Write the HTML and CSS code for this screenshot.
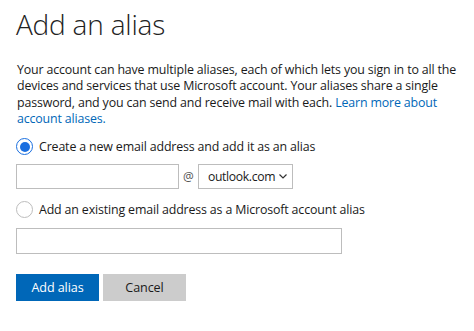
FILE: index.html
```html
<!DOCTYPE html>
<html>
<head>
<meta charset="utf-8">
<link rel="stylesheet" href="styles.css">
</head>
<body>
<main class="page">
  <h1 class="title">Add an alias</h1>
  <p class="intro">Your account can have multiple aliases, each of which lets you sign in to all the devices and services that use Microsoft account. Your aliases share a single password, and you can send and receive mail with each. <a href="#" class="link">Learn more about account aliases.</a></p>

  <label class="option option-first">
    <span class="radio radio-on"><span class="dot"></span></span>
    <span class="option-text">Create a new email address and add it as an alias</span>
  </label>
  <div class="new-row">
    <input class="field field-short" type="text">
    <span class="at">@</span>
    <div class="select-wrap">
      <select class="select"><option>outlook.com</option></select>
      <svg class="chev" width="8" height="5" viewBox="0 0 8 5"><path d="M0.5 0.5 L4 4 L7.5 0.5" fill="none" stroke="#333" stroke-width="1.2"/></svg>
    </div>
  </div>

  <label class="option option-second">
    <span class="radio"></span>
    <span class="option-text">Add an existing email address as a Microsoft account alias</span>
  </label>
  <input class="field field-long" type="text">

  <div class="actions">
    <button class="btn btn-primary">Add alias</button>
    <button class="btn btn-secondary">Cancel</button>
  </div>
</main>
</body>
</html>
```
FILE: styles.css
```css
html, body {
  margin: 0;
  padding: 0;
  background: #fff;
}
.page {
  padding: 7px 0 0 16px;
  font-family: "Open Sans", "Noto Sans", sans-serif;
  color: #1a1a1a;
}
.title {
  margin: 0;
  font-family: "Open Sans", sans-serif;
  font-weight: 300;
  font-size: 28px;
  line-height: 34px;
  color: #222;
  letter-spacing: -0.2px;
}
.intro {
  margin: 21px 0 0 1px;
  width: 445px;
  font-size: 12.4px;
  line-height: 16.3px;
  letter-spacing: -0.15px;
  color: #1a1a1a;
}
.link {
  color: #0067b8;
  text-decoration: none;
}
.option {
  display: flex;
  align-items: center;
  gap: 6px;
  font-size: 12.4px;
  line-height: 17px;
  letter-spacing: -0.15px;
  color: #1a1a1a;
}
.option-first { margin-top: 11px; }
.option-second { margin-top: 12px; }
.radio {
  box-sizing: border-box;
  width: 17px;
  height: 17px;
  border-radius: 50%;
  border: 1px solid #bdbdbd;
  display: flex;
  align-items: center;
  justify-content: center;
  flex: none;
}
.radio-on {
  border: 1.5px solid #1a6fe0;
}
.dot {
  width: 10px;
  height: 10px;
  border-radius: 50%;
  background: #1a6fe0;
}
.new-row {
  display: flex;
  align-items: center;
  margin-top: 9px;
}
.field {
  box-sizing: border-box;
  height: 25px;
  border: 1px solid #bdbdbd;
  margin: 0;
  padding: 0 6px;
  font: inherit;
  background: #fff;
}
.field-short { width: 163px; }
.at {
  width: 19px;
  text-align: center;
  font-size: 12px;
  color: #555;
}
.select-wrap {
  position: relative;
}
.select {
  box-sizing: border-box;
  appearance: none;
  -webkit-appearance: none;
  width: 95px;
  height: 25px;
  border: 1px solid #bdbdbd;
  border-radius: 0;
  background: #fff;
  padding: 0 0 0 9px;
  margin: 0;
  font-family: "Open Sans", sans-serif;
  font-size: 12.2px;
  letter-spacing: -0.35px;
  color: #1a1a1a;
}
.chev {
  position: absolute;
  right: 6px;
  top: 10px;
}
.field-long {
  display: block;
  width: 326px;
  height: 26px;
  margin-top: 10px;
}
.actions {
  display: flex;
  gap: 4px;
  margin-top: 20px;
}
.btn {
  width: 83px;
  height: 27px;
  border: 0;
  border-radius: 0;
  margin: 0;
  font-family: "Open Sans", sans-serif;
  font-size: 12.6px;
  letter-spacing: -0.1px;
  color: #1a1a1a;
}
.btn-primary {
  background: #0067b8;
  color: #fff;
}
.btn-secondary {
  background: #cccccc;
}
```
